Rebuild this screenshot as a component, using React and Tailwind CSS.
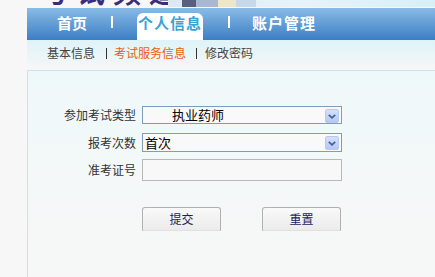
import React from "react";

const font = { fontFamily: '"Noto Sans CJK SC", "Noto Sans", sans-serif' };

function Chevron() {
  return (
    <div className="absolute right-[2px] top-[2px] w-[14px] h-[14px] rounded-[2px] border border-[#b7c9f3] bg-gradient-to-b from-[#d4e1fd] to-[#b3c8f6] flex items-center justify-center">
      <svg width="8" height="5" viewBox="0 0 8 5">
        <path d="M0.8 0.8 L4 3.8 L7.2 0.8" fill="none" stroke="#4d6189" strokeWidth="1.8" />
      </svg>
    </div>
  );
}

export default function App() {
  return (
    <div className="w-[435px] h-[277px] bg-[#f7f7f7] overflow-hidden" style={font}>
      <div className="ml-[27px] flex flex-col h-full">
        {/* header strip */}
        <div className="h-[8px] flex overflow-hidden">
          <div className="w-[141px] h-[7px] overflow-hidden">
            <div className="-mt-[24px] ml-[14px] text-[28px] leading-[30px] font-bold text-[#3b2d7c] tracking-[8px] whitespace-nowrap">
              考试频道
            </div>
          </div>
          <div className="flex-1 h-[7px] bg-gradient-to-r from-[#dce9f2] via-[#e6f3f9] to-[#d8eff8] flex">
            <div className="w-[14px]" />
            <div className="w-[14px] bg-[#58607e]" />
            <div className="w-[22px] bg-[#a9b7d2]" />
            <div className="w-[18px] bg-[#efe6c8]" />
            <div className="w-[20px] bg-[#c7d8ea]" />
          </div>
        </div>
        {/* nav */}
        <div className="h-[32px] flex items-stretch bg-gradient-to-b from-[#88bbe6] to-[#3c7ec4] text-white text-[15px] font-bold leading-none whitespace-nowrap">
          <div className="ml-[30px] w-[30px] self-center -mt-[4px]">首页</div>
          <div className="ml-[24px] w-[2px] h-[12px] bg-white self-center -mt-[5px]" />
          <div className="ml-[24px] w-[66px] mt-[5px] rounded-t-[6px] bg-white text-[#3aa2d6] flex justify-center pt-[2px] tracking-[1px]">
            个人信息
          </div>
          <div className="ml-[25px] w-[2px] h-[12px] bg-white self-center -mt-[5px]" />
          <div className="ml-[22px] self-center -mt-[4px] tracking-[1px]">账户管理</div>
        </div>
        {/* sub nav */}
        <div className="h-[30px] bg-gradient-to-b from-[#def3f8] to-[#f7f7f7] flex items-center text-[12px] text-[#444] leading-none pb-[4px] whitespace-nowrap">
          <span className="ml-[20px]">基本信息</span>
          <div className="ml-[11px] w-[1px] h-[11px] bg-[#333]" />
          <span className="ml-[7px] text-[#e8600c]">考试服务信息</span>
          <div className="ml-[10px] w-[1px] h-[11px] bg-[#333]" />
          <span className="ml-[8px]">修改密码</span>
        </div>
        {/* form panel */}
        <div className="flex-1 border-t border-l border-[#c9e1f0] bg-gradient-to-b from-[#eef8fa] via-[#f4f8f8] to-[#f7f7f7] flex flex-col">
          <div className="mt-[35px] flex items-center h-[18px]">
            <div className="w-[108px] text-right text-[12px] text-[#333]">参加考试类型</div>
            <div className="ml-[6px] relative w-[200px] h-[18px] border border-[#7f9db9] bg-[#f9f9f9] text-[13px] text-black leading-[16px] pl-[29px]">
              执业药师
              <Chevron />
            </div>
          </div>
          <div className="mt-[9px] flex items-center h-[19px]">
            <div className="w-[108px] text-right text-[12px] text-[#333]">报考次数</div>
            <div className="ml-[6px] relative w-[200px] h-[19px] border border-[#7f9db9] bg-[#f9f9f9] text-[13px] text-black leading-[17px] pl-[2px]">
              首次
              <Chevron />
            </div>
          </div>
          <div className="mt-[7px] flex items-center h-[22px]">
            <div className="w-[108px] text-right text-[12px] text-[#333]">准考证号</div>
            <div className="ml-[6px] w-[200px] h-[22px] border border-[#b8b8b8] bg-[#f8f8f8]" />
          </div>
          <div className="mt-[26px] flex">
            <button className="ml-[114px] w-[79px] h-[24px] border border-[#b0b0b0] border-b-[#e0e0e0] rounded-t-[3px] bg-gradient-to-b from-[#f9f9f9] to-[#ebebeb] text-[12px] text-[#1d1d5c] leading-none">
              提交
            </button>
            <button className="ml-[41px] w-[79px] h-[24px] border border-[#b0b0b0] border-b-[#e0e0e0] rounded-t-[3px] bg-gradient-to-b from-[#f9f9f9] to-[#ebebeb] text-[12px] text-[#1d1d5c] leading-none">
              重置
            </button>
          </div>
        </div>
      </div>
    </div>
  );
}
